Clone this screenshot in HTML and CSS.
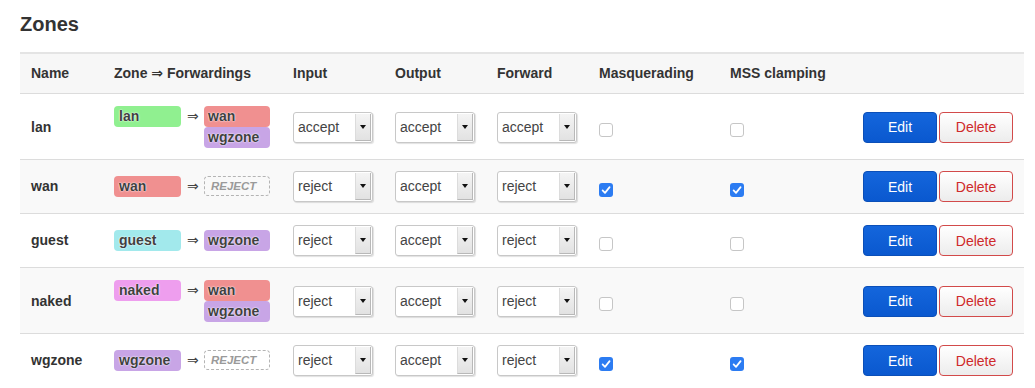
FILE: index.html
```html
<!DOCTYPE html>
<html lang="en">
<head>
<meta charset="utf-8">
<title>Zones</title>
<link rel="stylesheet" href="styles.css">
</head>
<body>
<h2 class="title">Zones</h2>
<table class="zones">
  <colgroup>
    <col class="c-name"><col class="c-zone"><col class="c-sel"><col class="c-sel"><col class="c-sel"><col class="c-masq"><col class="c-mss"><col class="c-act">
  </colgroup>
  <thead>
    <tr>
      <th>Name</th><th>Zone ⇒ Forwardings</th><th>Input</th><th>Output</th><th>Forward</th><th>Masquerading</th><th>MSS clamping</th><th></th>
    </tr>
  </thead>
  <tbody>
    <tr class="tall">
      <td class="name">lan</td>
      <td><div class="zf"><span class="badge lan">lan</span><span class="arrow">⇒</span><div class="fwd"><span class="badge wan">wan</span><span class="badge wg">wgzone</span></div></div></td>
      <td><div class="sel"><span class="val">accept</span><span class="drop"><i></i></span></div></td>
      <td><div class="sel"><span class="val">accept</span><span class="drop"><i></i></span></div></td>
      <td><div class="sel"><span class="val">accept</span><span class="drop"><i></i></span></div></td>
      <td><span class="cb"></span></td>
      <td><span class="cb"></span></td>
      <td><div class="acts"><button class="btn edit">Edit</button><button class="btn del">Delete</button></div></td>
    </tr>
    <tr class="alt">
      <td class="name">wan</td>
      <td><div class="zf"><span class="badge wan">wan</span><span class="arrow">⇒</span><div class="fwd"><span class="reject">REJECT</span></div></div></td>
      <td><div class="sel"><span class="val">reject</span><span class="drop"><i></i></span></div></td>
      <td><div class="sel"><span class="val">accept</span><span class="drop"><i></i></span></div></td>
      <td><div class="sel"><span class="val">reject</span><span class="drop"><i></i></span></div></td>
      <td><span class="cb on"><svg viewBox="0 0 14 14" width="14" height="14"><path d="M3.6 7.4 L6 9.9 L10.6 4.1" fill="none" stroke="#fff" stroke-width="1.7" stroke-linecap="round" stroke-linejoin="round"/></svg></span></td>
      <td><span class="cb on"><svg viewBox="0 0 14 14" width="14" height="14"><path d="M3.6 7.4 L6 9.9 L10.6 4.1" fill="none" stroke="#fff" stroke-width="1.7" stroke-linecap="round" stroke-linejoin="round"/></svg></span></td>
      <td><div class="acts"><button class="btn edit">Edit</button><button class="btn del">Delete</button></div></td>
    </tr>
    <tr>
      <td class="name">guest</td>
      <td><div class="zf"><span class="badge guest">guest</span><span class="arrow">⇒</span><div class="fwd"><span class="badge wg">wgzone</span></div></div></td>
      <td><div class="sel"><span class="val">reject</span><span class="drop"><i></i></span></div></td>
      <td><div class="sel"><span class="val">accept</span><span class="drop"><i></i></span></div></td>
      <td><div class="sel"><span class="val">reject</span><span class="drop"><i></i></span></div></td>
      <td><span class="cb"></span></td>
      <td><span class="cb"></span></td>
      <td><div class="acts"><button class="btn edit">Edit</button><button class="btn del">Delete</button></div></td>
    </tr>
    <tr class="alt tall">
      <td class="name">naked</td>
      <td><div class="zf"><span class="badge naked">naked</span><span class="arrow">⇒</span><div class="fwd"><span class="badge wan">wan</span><span class="badge wg">wgzone</span></div></div></td>
      <td><div class="sel"><span class="val">reject</span><span class="drop"><i></i></span></div></td>
      <td><div class="sel"><span class="val">accept</span><span class="drop"><i></i></span></div></td>
      <td><div class="sel"><span class="val">reject</span><span class="drop"><i></i></span></div></td>
      <td><span class="cb"></span></td>
      <td><span class="cb"></span></td>
      <td><div class="acts"><button class="btn edit">Edit</button><button class="btn del">Delete</button></div></td>
    </tr>
    <tr>
      <td class="name">wgzone</td>
      <td><div class="zf"><span class="badge wg">wgzone</span><span class="arrow">⇒</span><div class="fwd"><span class="reject">REJECT</span></div></div></td>
      <td><div class="sel"><span class="val">reject</span><span class="drop"><i></i></span></div></td>
      <td><div class="sel"><span class="val">accept</span><span class="drop"><i></i></span></div></td>
      <td><div class="sel"><span class="val">reject</span><span class="drop"><i></i></span></div></td>
      <td><span class="cb on"><svg viewBox="0 0 14 14" width="14" height="14"><path d="M3.6 7.4 L6 9.9 L10.6 4.1" fill="none" stroke="#fff" stroke-width="1.7" stroke-linecap="round" stroke-linejoin="round"/></svg></span></td>
      <td><span class="cb on"><svg viewBox="0 0 14 14" width="14" height="14"><path d="M3.6 7.4 L6 9.9 L10.6 4.1" fill="none" stroke="#fff" stroke-width="1.7" stroke-linecap="round" stroke-linejoin="round"/></svg></span></td>
      <td><div class="acts"><button class="btn edit">Edit</button><button class="btn del">Delete</button></div></td>
    </tr>
  </tbody>
</table>
</body>
</html>
```
FILE: styles.css
```css
html, body {
  margin: 0;
  padding: 0;
  background: #fff;
}
body {
  padding: 0 11px 0 20px;
  font-family: "Liberation Sans", Arial, "DejaVu Sans", sans-serif;
  color: #333;
  font-size: 14px;
}
.title {
  margin: 12px 0 16px;
  font-size: 20px;
  line-height: 24px;
  font-weight: bold;
  color: #333;
}
.zones {
  width: 1004px;
  border-collapse: collapse;
  table-layout: fixed;
  border-top: 2px solid #e4e4e4;
}
.c-name { width: 83px; }
.c-zone { width: 179px; }
.c-sel { width: 102px; }
.c-masq { width: 131px; }
.c-mss { width: 133px; }
.c-act { width: 172px; }
.zones th {
  background: #f7f7f7;
  text-align: left;
  font-weight: bold;
  font-size: 14px;
  line-height: 17px;
  padding: 11px 0 11px 11px;
  color: #333;
  white-space: nowrap;
}
.zones td {
  border-top: 1px solid #dcdcdc;
  padding: 11px 0 11px 11px;
  vertical-align: middle;
  line-height: 17px;
}
.zones tr.tall td { padding-top: 12px; }
.zones tr.alt td { background: #f9f9f9; }
.zones td.name {
  font-weight: bold;
  color: #333;
}
.zf {
  display: flex;
  align-items: flex-start;
  gap: 6px;
}
.arrow {
  font-family: "DejaVu Sans", sans-serif;
  font-size: 14px;
  line-height: 21px;
  height: 21px;
  color: #444;
  width: 11px;
}
.fwd {
  display: flex;
  flex-direction: column;
}
.badge {
  display: block;
  box-sizing: border-box;
  width: 66px;
  height: 21px;
  line-height: 21px;
  padding: 0 4px;
  border-radius: 4px;
  font-weight: bold;
  font-size: 14px;
  color: #404040;
  text-shadow: 0 0 2px #fff, 0 0 1px #fff;
  white-space: nowrap;
}
.zf > .badge { width: 67px; padding-left: 5px; }
.badge.lan { background: #90f090; }
.badge.wan { background: #f09090; }
.badge.wg { background: #c8a5e6; }
.badge.guest { background: #a2e9ec; }
.badge.naked { background: #ee9eee; }
.reject {
  display: block;
  box-sizing: border-box;
  width: 66px;
  height: 20px;
  line-height: 18px;
  padding-left: 6px;
  border: 1px dashed #b4b4b4;
  border-radius: 4px;
  font-size: 11.5px;
  font-weight: bold;
  font-style: italic;
  color: #9a9a9a;
}
.sel {
  display: flex;
  box-sizing: border-box;
  width: 80px;
  height: 31px;
  border: 1px solid #c8c8c8;
  border-radius: 3px;
  background: #fff;
  box-shadow: 1px 1px 1px rgba(0,0,0,0.12);
  align-items: stretch;
  padding: 1px 1px 1px 0;
}
.sel .val {
  flex: 1;
  padding-left: 4px;
  line-height: 27px;
  font-size: 14px;
  color: #444;
}
.sel .drop {
  width: 14px;
  background: linear-gradient(#f4f4f4, #e2e2e2);
  border-left: 1px solid #dcdcdc;
  border-right: 1px solid #b8b8b8;
  border-bottom: 1px solid #b8b8b8;
  display: flex;
  align-items: center;
  justify-content: center;
}
.sel .drop i {
  display: block;
  width: 0;
  height: 0;
  border-left: 3px solid transparent;
  border-right: 3px solid transparent;
  border-top: 4px solid #111;
}
.cb {
  display: block;
  box-sizing: border-box;
  width: 14px;
  height: 14px;
  margin-top: 6px;
  border: 1px solid #c6c6c6;
  border-radius: 3px;
  background: #fff;
}
.cb.on {
  border: none;
  background: #2c7cf2;
}
.cb svg { display: block; }
.acts {
  display: flex;
  gap: 2px;
}
.btn {
  box-sizing: border-box;
  width: 74px;
  height: 31px;
  border-radius: 4px;
  font-family: "Liberation Sans", Arial, sans-serif;
  font-size: 14px;
  padding: 0;
  cursor: pointer;
}
.btn.edit {
  background: linear-gradient(#1466dc, #0a58cf);
  border: 1px solid #0b4fb8;
  color: #fff;
}
.btn.del {
  background: linear-gradient(#fff, #ececec);
  border: 1px solid #d24a4a;
  color: #cf2a2a;
}
```
